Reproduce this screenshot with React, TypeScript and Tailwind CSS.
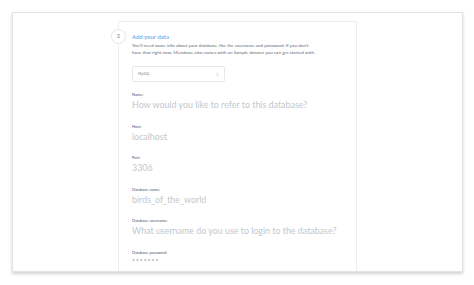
import React from 'react';

const fields = [
    { label: 'Name:', value: 'How would you like to refer to this database?' },
    { label: 'Host:', value: 'localhost' },
    { label: 'Port:', value: '3306' },
    { label: 'Database name:', value: 'birds_of_the_world' },
    { label: 'Database username:', value: 'What username do you use to login to the database?' },
];

export default function App() {
    return (
        <div className="h-[285px] w-[474px] bg-white pl-[12px] pt-[12px] font-['Lato',sans-serif]">
            <div className="flex h-[260px] w-[451px] overflow-hidden border border-[#e3e3e3] bg-white pl-[105px] shadow-[0_2px_3px_rgba(0,0,0,0.18)]">
                <div className="relative mt-[8px] w-[239px] border-x border-t border-[#ebeef0] pl-[13px] pt-[11px]">
                    <div className="absolute left-[-8px] top-[7px] flex h-[15px] w-[15px] items-center justify-center rounded-full border border-[#e2e6e9] bg-white text-[5px] leading-none text-[#6c7785]">
                        2
                    </div>
                    <h2 className="text-[6px] leading-[8px] text-[#509ee3]">Add your data</h2>
                    <p className="mt-[1px] whitespace-nowrap text-[4.6px] leading-[7px] text-[#5f6b78]">
                        You'll need some info about your database, like the username and password. If you don't
                        <br />
                        have that right now, Metabase also comes with an Sample dataset you can get started with.
                    </p>
                    <div className="mt-[10px] flex h-[16px] w-[93px] items-center justify-between rounded-[2px] border border-[#e5e8eb] px-[5px] text-[3.6px] text-[#74838f]">
                        <span>MySQL</span>
                        <svg width="3" height="5" viewBox="0 0 3 5" fill="none" stroke="#b8bec5" strokeWidth="0.6">
                            <path d="M0.5 2 L1.5 1 L2.5 2 M0.5 3 L1.5 4 L2.5 3" />
                        </svg>
                    </div>
                    <div className="mt-[10px] flex flex-col">
                        {fields.map((f) => (
                            <div key={f.label} className="mb-[12.5px] flex flex-col">
                                <span className="text-[4px] leading-[5px] text-[#4c5773]">{f.label}</span>
                                <span className="mt-[2px] whitespace-nowrap text-[8.9px] leading-[12px] text-[#c3c7cc]">{f.value}</span>
                            </div>
                        ))}
                        <div className="flex flex-col">
                            <span className="text-[4px] leading-[5px] text-[#4c5773]">Database password:</span>
                            <span className="mt-[1px] text-[5px] leading-[8px] tracking-[1px] text-[#b8bec5]">•••••••</span>
                        </div>
                    </div>
                </div>
            </div>
        </div>
    );
}
